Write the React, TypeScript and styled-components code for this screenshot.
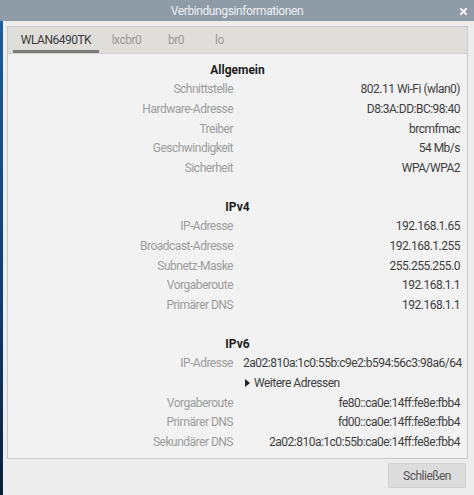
import React from "react";
import styled, { createGlobalStyle } from "styled-components";

const Global = createGlobalStyle`
  html, body { margin: 0; padding: 0; }
  body {
    width: 474px; height: 495px; overflow: hidden;
    background: linear-gradient(180deg, #1d5fa3 0%, #0d3d73 60%, #0a1f3a 100%);
    font-family: Roboto, "Liberation Sans", sans-serif;
  }
`;

const Frame = styled.div`
  width: 474px; height: 495px;
  display: flex; flex-direction: column;
`;

const TitleBar = styled.div`
  height: 21px; flex: none;
  background: #8f9ba7;
  color: #eef1f4;
  font-size: 12px;
  letter-spacing: -0.4px;
  display: flex; align-items: center; justify-content: center;
  position: relative;
`;

const Close = styled.span`
  position: absolute; right: 4px; top: 4px;
  width: 14px; height: 14px;
  display: flex; align-items: center; justify-content: center;
`;

const Body = styled.div`
  flex: 1;
  display: flex;
  min-width: 0;
`;

const Desktop = styled.div`
  width: 3px; flex: none;
`;

const Window = styled.div`
  flex: 1;
  min-width: 0;
  background: #ededed;
  border-left: 1px solid #f4efec;
  padding: 5px 6px 7px 3px;
  display: flex; flex-direction: column;
`;

const Notebook = styled.div`
  border: 1px solid #c9c9c9;
  display: flex; flex-direction: column;
  height: 433px;
  box-sizing: border-box;
`;

const TabBar = styled.div`
  height: 26px;
  flex: none;
  background: #e0deda;
  border-bottom: 1px solid #d2d0cc;
  display: flex;
  padding-left: 5px;
`;

const Tab = styled.div<{ $active?: boolean; $w: number }>`
  width: ${p => p.$w}px;
  display: flex; align-items: center; justify-content: center;
  font-size: 12px;
  letter-spacing: -0.5px;
  color: ${p => (p.$active ? "#3a3a3a" : "#9a9a9a")};
  box-sizing: border-box;
  border-bottom: 3px solid ${p => (p.$active ? "#7b7b7b" : "transparent")};
  padding-top: 3px;
`;

const Content = styled.div`
  flex: 1;
  min-width: 0;
  background: #f2f2f2;
  padding: 6px 7px 0 0;
  display: grid;
  grid-template-columns: 225px minmax(0, 1fr);
  column-gap: 10px;
  grid-auto-rows: 19.58px;
  align-items: center;
  font-size: 12px;
  letter-spacing: -0.5px;
`;

const Header = styled.div`
  grid-column: 1 / 3;
  text-align: center;
  font-weight: 700;
  font-size: 12px;
  letter-spacing: 0;
  color: #1e1e1e;
  padding-left: 7px;
`;

const Label = styled.div`
  text-align: right;
  color: #9c9c9c;
  white-space: nowrap;
`;

const Value = styled.div`
  text-align: right;
  color: #3e3e3e;
  white-space: nowrap;
`;

const Spacer = styled.div`
  grid-column: 1 / 3;
`;

const Expander = styled.div`
  grid-column: 2;
  display: flex; align-items: center; gap: 4px;
  color: #3e3e3e;
  padding-left: 2px;
`;

const Footer = styled.div`
  display: flex; justify-content: flex-end;
  padding-top: 4px;
`;

const Button = styled.button`
  width: 78px; height: 25px;
  background: #dcdcdc;
  border: 1px solid #d0d0d0;
  border-radius: 1px;
  font-family: Roboto, "Liberation Sans", sans-serif;
  font-size: 12px;
  letter-spacing: -0.5px;
  color: #555;
  margin-right: 2px;
`;

type Row = [string, string];

const sections: { title: string; rows: Row[] }[] = [
  {
    title: "Allgemein",
    rows: [
      ["Schnittstelle", "802.11 Wi-Fi (wlan0)"],
      ["Hardware-Adresse", "D8:3A:DD:BC:98:40"],
      ["Treiber", "brcmfmac"],
      ["Geschwindigkeit", "54 Mb/s"],
      ["Sicherheit", "WPA/WPA2"],
    ],
  },
  {
    title: "IPv4",
    rows: [
      ["IP-Adresse", "192.168.1.65"],
      ["Broadcast-Adresse", "192.168.1.255"],
      ["Subnetz-Maske", "255.255.255.0"],
      ["Vorgaberoute", "192.168.1.1"],
      ["Primärer DNS", "192.168.1.1"],
    ],
  },
];

const ipv6After: Row[] = [
  ["Vorgaberoute", "fe80::ca0e:14ff:fe8e:fbb4"],
  ["Primärer DNS", "fd00::ca0e:14ff:fe8e:fbb4"],
  ["Sekundärer DNS", "2a02:810a:1c0:55b:ca0e:14ff:fe8e:fbb4"],
];

const tabs: [string, number][] = [
  ["WLAN6490TK", 86],
  ["lxcbr0", 55],
  ["br0", 44],
  ["lo", 43],
];

export default function App() {
  return (
    <>
      <Global />
      <Frame>
        <TitleBar>
          Verbindungsinformationen
          <Close>
            <svg width="9" height="9" viewBox="0 0 10 10">
              <path d="M1.5 1.5 L8.5 8.5 M8.5 1.5 L1.5 8.5" stroke="#ffffff" strokeWidth="2.2" />
            </svg>
          </Close>
        </TitleBar>
        <Body>
          <Desktop />
          <Window>
            <Notebook>
              <TabBar>
                {tabs.map(([t, w], i) => (
                  <Tab key={t} $active={i === 0} $w={w}>{t}</Tab>
                ))}
              </TabBar>
              <Content>
                {sections.map(s => (
                  <React.Fragment key={s.title}>
                    <Header>{s.title}</Header>
                    {s.rows.map(([l, v]) => (
                      <React.Fragment key={l}>
                        <Label>{l}</Label>
                        <Value>{v}</Value>
                      </React.Fragment>
                    ))}
                    <Spacer />
                  </React.Fragment>
                ))}
                <Header>IPv6</Header>
                <Label>IP-Adresse</Label>
                <Value>2a02:810a:1c0:55b:c9e2:b594:56c3:98a6/64</Value>
                <Expander>
                  <svg width="5" height="8" viewBox="0 0 5 8">
                    <path d="M0 0 L5 4 L0 8 Z" fill="#222" />
                  </svg>
                  Weitere Adressen
                </Expander>
                {ipv6After.map(([l, v]) => (
                  <React.Fragment key={l}>
                    <Label>{l}</Label>
                    <Value>{v}</Value>
                  </React.Fragment>
                ))}
              </Content>
            </Notebook>
            <Footer>
              <Button>Schließen</Button>
            </Footer>
          </Window>
        </Body>
      </Frame>
    </>
  );
}
